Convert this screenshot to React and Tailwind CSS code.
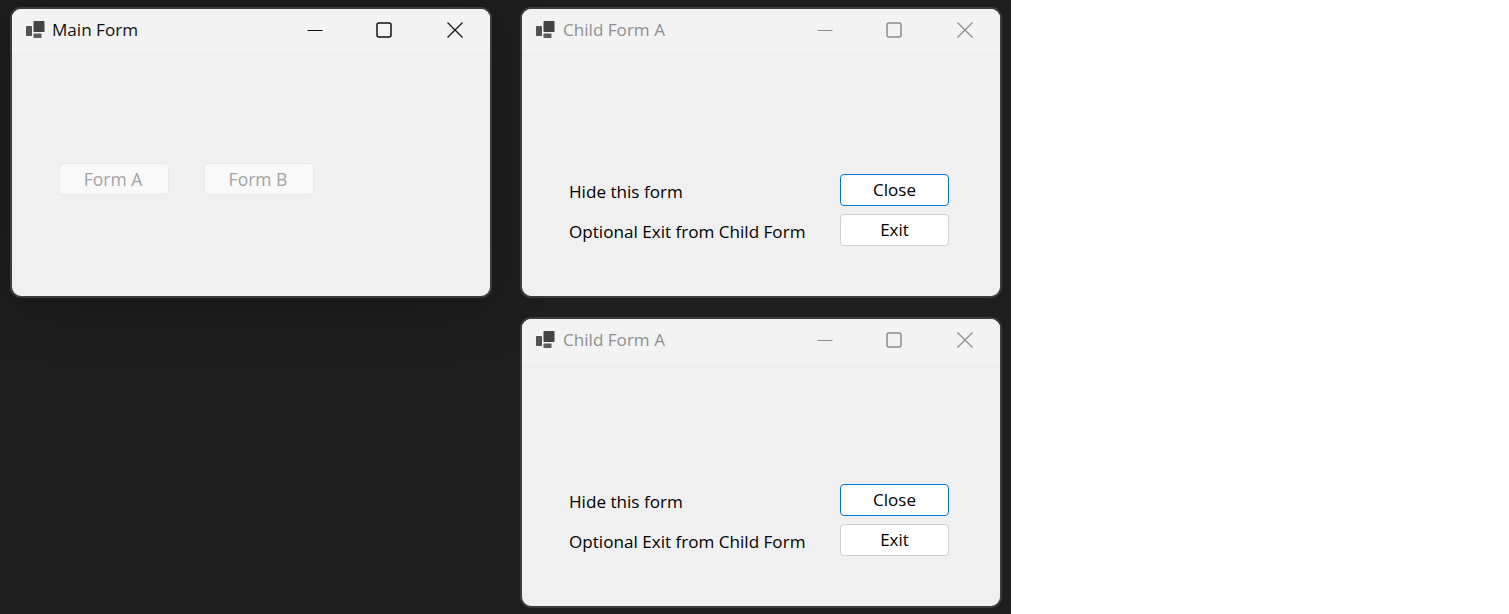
const font = { fontFamily: '"Open Sans", "Noto Sans", sans-serif' };

function AppIcon() {
  return (
    <svg width="19" height="18" viewBox="0 0 19 18" className="shrink-0">
      <rect x="0" y="5" width="6" height="10" rx="0.8" fill="#525252" />
      <rect x="7.5" y="0" width="11" height="11" rx="0.8" fill="#434343" />
      <rect x="7.5" y="12.5" width="8" height="4.5" rx="0.8" fill="#5c5c5c" />
    </svg>
  );
}

function TitleBar({ title, active }) {
  const stroke = active ? "#111" : "#8c8c8c";
  return (
    <div className="flex h-[43px] items-center bg-[#f3f3f3] pb-[2px] pl-[14px]">
      <AppIcon />
      <span className={`ml-[7px] text-[17.1px] leading-none ${active ? "text-[#111]" : "pl-[1px] text-[#8f8f8f]"}`}>{title}</span>
      <div className="ml-auto flex items-center">
        <svg width="16" height="16" viewBox="0 0 16 16" className="mr-[53px]">
          <path d="M0.5 8.5H15.5" stroke={stroke} strokeWidth="1" />
        </svg>
        <svg width="16" height="16" viewBox="0 0 16 16" className="mr-[55px]">
          <rect x="1" y="1" width="14" height="14" rx="2" fill="none" stroke={stroke} strokeWidth="1.5" />
        </svg>
        <svg width="16" height="16" viewBox="0 0 16 16" className="mr-[27px]">
          <path d="M0.5 0.5L15.5 15.5M15.5 0.5L0.5 15.5" stroke={stroke} strokeWidth="1.2" />
        </svg>
      </div>
    </div>
  );
}

function Window({ title, active, children }) {
  return (
    <div className={`flex h-[291px] w-[482px] flex-col overflow-hidden rounded-[11px] border-2 border-[#3c3c3c] bg-[#f0f0f0] ${active ? "shadow-[0_4px_60px_rgba(0,0,0,0.3)]" : ""}`} style={font}>
      <TitleBar title={title} active={active} />
      {children}
    </div>
  );
}

function ChildForm() {
  return (
    <Window title="Child Form A">
      <div className="flex flex-col gap-[8px] pl-[47px] pt-[122px]">
        <div className="flex items-center">
          <span className="w-[271px] pt-[3px] text-[17.1px] text-black">Hide this form</span>
          <button className="h-[32px] w-[109px] rounded-[4px] border border-[#0078d4] bg-white pb-[1px] text-[17px] text-black">Close</button>
        </div>
        <div className="flex items-center">
          <span className="w-[271px] pt-[3px] text-[17.1px] text-black">Optional Exit from Child Form</span>
          <button className="h-[32px] w-[109px] rounded-[4px] border border-[#cfcfcf] bg-white pb-[1px] text-[17px] text-black">Exit</button>
        </div>
      </div>
    </Window>
  );
}

export default function App() {
  return (
    <div className="h-[614px] w-[1509px] overflow-hidden bg-white">
      <div className="flex h-full w-[1011px] gap-[28px] overflow-hidden bg-[#1e1e1e] pl-[10px] pt-[7px]">
        <Window title="Main Form" active>
          <div className="flex gap-[35px] pl-[47px] pt-[111px]">
            <button className="h-[32px] w-[110px] rounded-[4px] border border-[#e8e8e8] bg-[#f9f9f9] pr-[2px] text-[17.5px] text-[#a3a3a3]">Form A</button>
            <button className="h-[32px] w-[110px] rounded-[4px] border border-[#e8e8e8] bg-[#f9f9f9] pr-[2px] text-[17.5px] text-[#a3a3a3]">Form B</button>
          </div>
        </Window>
        <div className="flex flex-col gap-[19px]">
          <ChildForm />
          <ChildForm />
        </div>
      </div>
    </div>
  );
}
